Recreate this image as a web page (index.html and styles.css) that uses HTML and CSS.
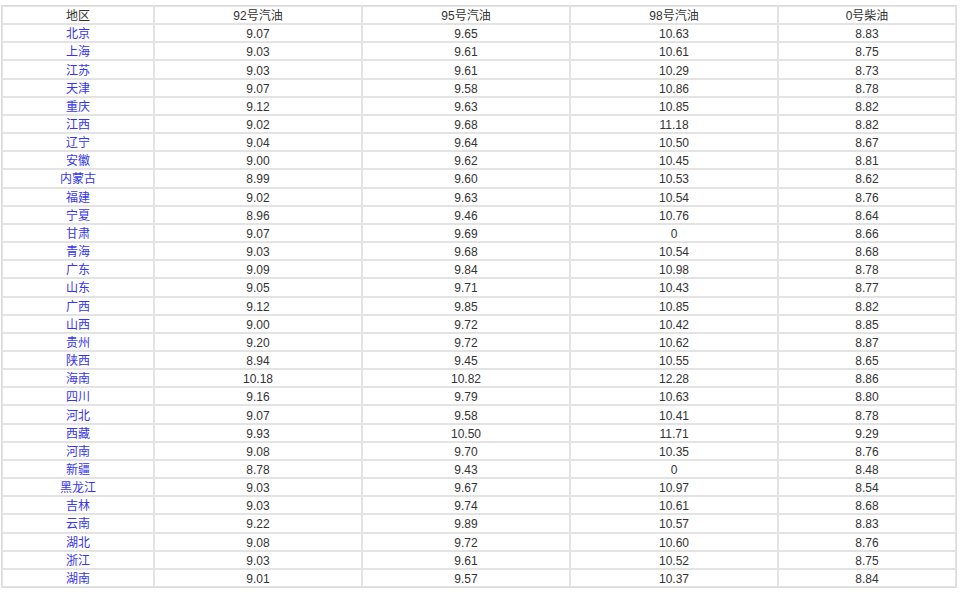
FILE: index.html
```html
<!DOCTYPE html>
<html lang="zh">
<head>
<meta charset="utf-8">
<title>油价</title>
<link rel="stylesheet" href="styles.css">
</head>
<body>
<table class="prices">
<colgroup>
<col class="c-region"><col class="c-num"><col class="c-num"><col class="c-num"><col class="c-last">
</colgroup>
<tbody>
<tr><th>地区</th><th>92号汽油</th><th>95号汽油</th><th>98号汽油</th><th>0号柴油</th></tr>
<tr><td class="r">北京</td><td>9.07</td><td>9.65</td><td>10.63</td><td>8.83</td></tr>
<tr><td class="r">上海</td><td>9.03</td><td>9.61</td><td>10.61</td><td>8.75</td></tr>
<tr><td class="r">江苏</td><td>9.03</td><td>9.61</td><td>10.29</td><td>8.73</td></tr>
<tr><td class="r">天津</td><td>9.07</td><td>9.58</td><td>10.86</td><td>8.78</td></tr>
<tr><td class="r">重庆</td><td>9.12</td><td>9.63</td><td>10.85</td><td>8.82</td></tr>
<tr><td class="r">江西</td><td>9.02</td><td>9.68</td><td>11.18</td><td>8.82</td></tr>
<tr><td class="r">辽宁</td><td>9.04</td><td>9.64</td><td>10.50</td><td>8.67</td></tr>
<tr><td class="r">安徽</td><td>9.00</td><td>9.62</td><td>10.45</td><td>8.81</td></tr>
<tr><td class="r">内蒙古</td><td>8.99</td><td>9.60</td><td>10.53</td><td>8.62</td></tr>
<tr><td class="r">福建</td><td>9.02</td><td>9.63</td><td>10.54</td><td>8.76</td></tr>
<tr><td class="r">宁夏</td><td>8.96</td><td>9.46</td><td>10.76</td><td>8.64</td></tr>
<tr><td class="r">甘肃</td><td>9.07</td><td>9.69</td><td>0</td><td>8.66</td></tr>
<tr><td class="r">青海</td><td>9.03</td><td>9.68</td><td>10.54</td><td>8.68</td></tr>
<tr><td class="r">广东</td><td>9.09</td><td>9.84</td><td>10.98</td><td>8.78</td></tr>
<tr><td class="r">山东</td><td>9.05</td><td>9.71</td><td>10.43</td><td>8.77</td></tr>
<tr><td class="r">广西</td><td>9.12</td><td>9.85</td><td>10.85</td><td>8.82</td></tr>
<tr><td class="r">山西</td><td>9.00</td><td>9.72</td><td>10.42</td><td>8.85</td></tr>
<tr><td class="r">贵州</td><td>9.20</td><td>9.72</td><td>10.62</td><td>8.87</td></tr>
<tr><td class="r">陕西</td><td>8.94</td><td>9.45</td><td>10.55</td><td>8.65</td></tr>
<tr><td class="r">海南</td><td>10.18</td><td>10.82</td><td>12.28</td><td>8.86</td></tr>
<tr><td class="r">四川</td><td>9.16</td><td>9.79</td><td>10.63</td><td>8.80</td></tr>
<tr><td class="r">河北</td><td>9.07</td><td>9.58</td><td>10.41</td><td>8.78</td></tr>
<tr><td class="r">西藏</td><td>9.93</td><td>10.50</td><td>11.71</td><td>9.29</td></tr>
<tr><td class="r">河南</td><td>9.08</td><td>9.70</td><td>10.35</td><td>8.76</td></tr>
<tr><td class="r">新疆</td><td>8.78</td><td>9.43</td><td>0</td><td>8.48</td></tr>
<tr><td class="r">黑龙江</td><td>9.03</td><td>9.67</td><td>10.97</td><td>8.54</td></tr>
<tr><td class="r">吉林</td><td>9.03</td><td>9.74</td><td>10.61</td><td>8.68</td></tr>
<tr><td class="r">云南</td><td>9.22</td><td>9.89</td><td>10.57</td><td>8.83</td></tr>
<tr><td class="r">湖北</td><td>9.08</td><td>9.72</td><td>10.60</td><td>8.76</td></tr>
<tr><td class="r">浙江</td><td>9.03</td><td>9.61</td><td>10.52</td><td>8.75</td></tr>
<tr><td class="r">湖南</td><td>9.01</td><td>9.57</td><td>10.37</td><td>8.84</td></tr>
</tbody>
</table>
</body>
</html>
```

FILE: styles.css
```css
html, body {
  margin: 0;
  padding: 0;
  background: #fff;
}
body {
  font-family: "Liberation Sans", Arial, "Noto Sans CJK SC", sans-serif;
  font-size: 12px;
  color: #333;
}
.prices {
  margin: 5px 0 0 1px;
  width: 956px;
  height: 583px;
  table-layout: fixed;
  border-collapse: separate;
  border-spacing: 0;
  border: 1px solid #dcdcdc;
}
.c-region { width: 152px; }
.c-num { width: 208px; }
.c-last { width: auto; }
.prices th,
.prices td {
  padding: 2px 0 0;
  border: 1px solid #e3e3e3;
  text-align: center;
  vertical-align: middle;
  font-weight: normal;
  line-height: 12px;
  white-space: nowrap;
}
.prices th {
  color: #333;
}
.prices td.r {
  color: #3434f0;
}
```
